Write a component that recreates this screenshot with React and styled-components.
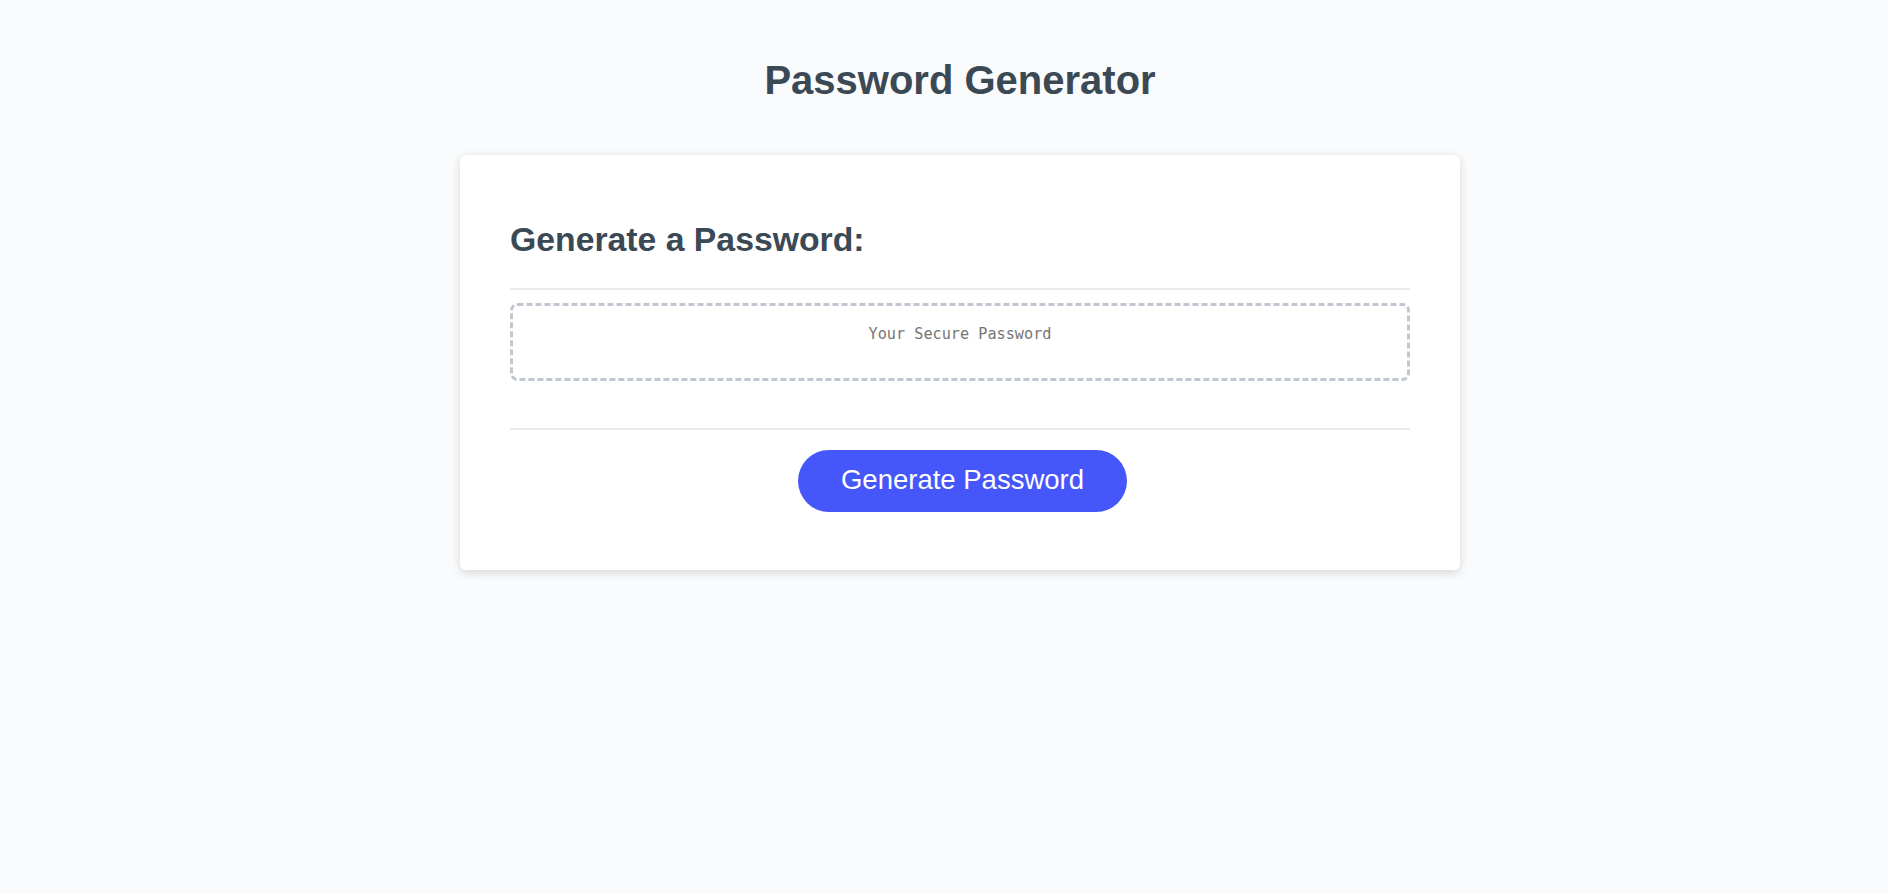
import React from "react";
import styled, { createGlobalStyle } from "styled-components";

const GlobalStyle = createGlobalStyle`
  *, *::before, *::after { box-sizing: border-box; }
  html, body { margin: 0; padding: 0; height: 100%; }
  body {
    font-family: "Liberation Sans", Arial, sans-serif;
    background-color: #f9fbfd;
  }
`;

const Wrapper = styled.div`
  padding: 30px 20px 0 52px;
`;

const Header = styled.header`
  text-align: center;
  padding: 0 20px 25px;
  color: #3b4954;
`;

const Title = styled.h1`
  font-size: 40px;
  line-height: 46px;
  font-weight: 700;
  margin: 27px 0 27px;
`;

const Card = styled.div`
  background-color: #ffffff;
  border-radius: 6px;
  box-shadow: rgba(0, 0, 0, 0.15) 0px 2.5px 10px 0px;
  color: #3b4954;
  font-size: 22.5px;
  margin: 0 auto;
  max-width: 1000px;
  padding: 37.5px 50px;
`;

const Divider = styled.div`
  width: 100%;
  height: 2px;
  background: #e7e9eb;
`;

const CardHeader = styled.div``;

const CardTitle = styled.h2`
  font-size: 33.75px;
  line-height: 38.8px;
  font-weight: 700;
  margin: 27px 0 29.5px;
`;

const CardBody = styled.div`
  height: 138px;
  padding-top: 13px;
`;

const PasswordBox = styled.textarea`
  appearance: none;
  display: block;
  width: 100%;
  height: 78.4px;
  margin: 0;
  padding: 19px 18.75px 0;
  border: 3px dashed #c0c7cf;
  border-radius: 7.5px;
  font-family: "DejaVu Sans Mono", "Liberation Mono", monospace;
  font-size: 15.2px;
  line-height: 19px;
  text-align: center;
  resize: none;
  overflow: hidden;
  color: #333;
  background: #fff;
  outline: none;
  &::placeholder {
    color: #757575;
  }
`;

const CardFooter = styled.div`
  text-align: center;
`;

const Button = styled.button`
  border: none;
  background-color: #4556fb;
  border-radius: 31.25px;
  color: #ffffff;
  display: inline-block;
  font-family: "Liberation Sans", Arial, sans-serif;
  font-size: 27.5px;
  line-height: 27.5px;
  margin: 20px 20px 20px 25px;
  padding: 16.5px 42.5px 18.5px;
  text-align: center;
  cursor: pointer;
`;

export default function App() {
  return (
    <>
      <GlobalStyle />
      <Wrapper>
        <Header>
          <Title>Password Generator</Title>
        </Header>
        <Card>
          <CardHeader>
            <CardTitle>Generate a Password:</CardTitle>
            <Divider />
          </CardHeader>
          <CardBody>
            <PasswordBox
              readOnly
              placeholder="Your Secure Password"
              aria-label="Generated Password"
            />
          </CardBody>
          <CardFooter>
            <Divider />
            <Button type="button">Generate Password</Button>
          </CardFooter>
        </Card>
      </Wrapper>
    </>
  );
}
